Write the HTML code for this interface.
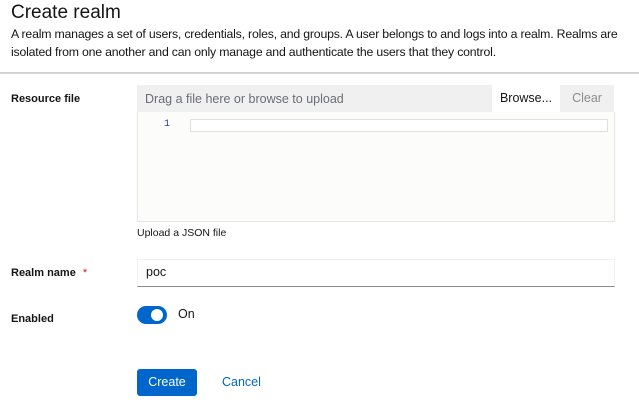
<!DOCTYPE html>
<html><head><style>
body{margin:0;width:639px;height:413px;background:#fff;font-family:"Liberation Sans",sans-serif;color:#151515;position:relative;overflow:hidden}
.a{position:absolute}
</style></head><body>
<div class="a" style="left:11px;top:2px;font-size:19px;">Create realm</div>
<div class="a" style="left:11px;top:25px;font-size:12.3px;line-height:18px;width:625px;letter-spacing:-0.2px">A realm manages a set of users, credentials, roles, and groups. A user belongs to and logs into a realm. Realms are isolated from one another and can only manage and authenticate the users that they control.</div>
<div class="a" style="left:0;top:72px;width:639px;height:2px;background:#d2d2d2"></div>
<div class="a" style="left:11px;top:93px;font-size:11px;font-weight:bold">Resource file</div>
<div class="a" style="left:137px;top:85px;width:477px;height:27px;background:#f0f0f0"></div>
<div class="a" style="left:145px;top:92px;font-size:12.5px;color:#6a6e73">Drag a file here or browse to upload</div>
<div class="a" style="left:492px;top:85px;width:68px;height:27px;background:#fff;font-size:12.5px;line-height:27px;text-align:center">Browse...</div>
<div class="a" style="left:560px;top:85px;width:54px;height:27px;font-size:12.5px;line-height:27px;text-align:center;color:#8a8d90">Clear</div>
<div class="a" style="left:137px;top:112px;width:476px;height:109px;background:#fcfcfa;border:1px solid #e6e6e6;border-top:none"></div>
<div class="a" style="left:164px;top:119px;font-size:10px;font-family:'Liberation Mono',monospace;color:#2a3d8f">1</div>
<div class="a" style="left:190px;top:119px;width:416px;height:11px;border:1px solid #e0e0e0;background:#fff"></div>
<div class="a" style="left:137px;top:227px;font-size:10.5px;color:#151515">Upload a JSON file</div>
<div class="a" style="left:11px;top:267px;font-size:11px;font-weight:bold">Realm name <span style="color:#c9190b;font-weight:normal;margin-left:4px">*</span></div>
<div class="a" style="left:137px;top:259px;width:476px;height:26px;border:1px solid #f0f0f0;border-bottom:1px solid #8a8d90"></div>
<div class="a" style="left:146px;top:265px;font-size:12.5px">poc</div>
<div class="a" style="left:11px;top:313px;font-size:11px;font-weight:bold">Enabled</div>
<div class="a" style="left:137px;top:306px;width:30px;height:18px;border-radius:9px;background:#0066cc"></div>
<div class="a" style="left:151px;top:309px;width:12px;height:12px;border-radius:6px;background:#fff"></div>
<div class="a" style="left:178px;top:307px;font-size:12.5px">On</div>
<div class="a" style="left:137px;top:369px;width:60px;height:27px;border-radius:3px;background:#0066cc;color:#fff;font-size:12.5px;line-height:27px;text-align:center">Create</div>
<div class="a" style="left:222px;top:375px;font-size:12.5px;color:#0066cc">Cancel</div>
</body></html>
